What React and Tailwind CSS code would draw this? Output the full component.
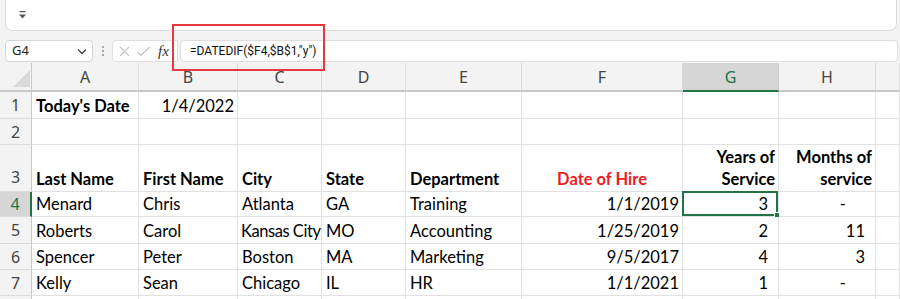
import React from "react";

const cols = ["A", "B", "C", "D", "E", "F", "G", "H", ""];
const colW = "grid-cols-[32px_107px_99px_84px_84px_116px_161px_96px_97px_1fr]";
const uiFont = { fontFamily: '"Noto Sans", "Open Sans", sans-serif' };
const cellFont = { fontFamily: 'Lato, "Liberation Sans", sans-serif' };

const rows = [
  { n: 1, h: "h-[27px]", cells: [
    { t: "Today's Date", b: true },
    { t: "1/4/2022", r: true },
    {}, {}, {}, {}, {}, {}, {},
  ] },
  { n: 2, h: "h-[26px]", cells: [{}, {}, {}, {}, {}, {}, {}, {}, {}] },
  { n: 3, h: "h-[47px]", cells: [
    { t: "Last Name", b: true },
    { t: "First Name", b: true },
    { t: "City", b: true },
    { t: "State", b: true },
    { t: "Department", b: true },
    { t: "Date of Hire", b: true, c: true, red: true },
    { t: ["Years of", "Service"], b: true, r: true },
    { t: ["Months of", "service"], b: true, r: true },
    {},
  ] },
  { n: 4, h: "h-[25px]", sel: true, cells: [
    { t: "Menard" }, { t: "Chris" }, { t: "Atlanta" }, { t: "GA" }, { t: "Training" },
    { t: "1/1/2019", r: true }, { t: "3", acc: true, active: true }, { t: "-", dash: true }, {},
  ] },
  { n: 5, h: "h-[27px]", cells: [
    { t: "Roberts" }, { t: "Carol" }, { t: "Kansas City", tight: true }, { t: "MO" }, { t: "Accounting" },
    { t: "1/25/2019", r: true }, { t: "2", acc: true }, { t: "11", acc: true }, {},
  ] },
  { n: 6, h: "h-[26px]", cells: [
    { t: "Spencer" }, { t: "Peter" }, { t: "Boston" }, { t: "MA" }, { t: "Marketing" },
    { t: "9/5/2017", r: true }, { t: "4", acc: true }, { t: "3", acc: true }, {},
  ] },
  { n: 7, h: "h-[26px]", cells: [
    { t: "Kelly" }, { t: "Sean" }, { t: "Chicago" }, { t: "IL" }, { t: "HR" },
    { t: "1/1/2021", r: true }, { t: "1", acc: true }, { t: "-", dash: true }, {},
  ] },
  { n: "", h: "h-[26px]", cells: [{}, {}, {}, {}, {}, {}, {}, {}, {}] },
];

function Cell({ c }) {
  let align = "justify-start pl-[4px]";
  if (c.r) align = "justify-end pr-[3px]";
  if (c.c) align = "justify-center";
  if (c.acc) align = "justify-end pr-[10px]";
  if (c.dash) align = "justify-end pr-[29px]";
  if (c.tight) align = "justify-start pl-[3px] tracking-[-0.45px]";
  const color = c.red ? "text-[#ee1c25]" : "text-black";
  return (
    <div
      className={`relative flex items-end ${align} border-r border-b border-[#e1e1e1] bg-white whitespace-nowrap text-[16.5px] leading-[22px] pb-[1px] ${c.b ? "font-bold" : ""} ${color}`}
      style={cellFont}
    >
      {Array.isArray(c.t) ? (
        <div className="flex flex-col items-end">
          {c.t.map((l) => (
            <span key={l}>{l}</span>
          ))}
        </div>
      ) : (
        <span>{c.t}</span>
      )}
      {c.active && (
        <div className="absolute -left-[1px] -top-[1px] right-0 bottom-0 border-2 border-[#217346]">
          <div className="absolute -right-[4px] -bottom-[4px] w-[6px] h-[6px] bg-[#217346] border border-white" />
        </div>
      )}
    </div>
  );
}

export default function App() {
  return (
    <div className="relative w-[900px] h-[299px] overflow-hidden bg-[#f3f3f3]" style={uiFont}>
      {/* quick access panel */}
      <div className="ml-[5px] mr-[3px] h-[31px] bg-white border border-t-0 border-[#dcdcdc] rounded-b-[7px] flex items-center pl-[12px]">
        <svg width="9" height="10" viewBox="0 0 9 10">
          <rect x="1.5" y="1" width="6" height="1.2" fill="#555" />
          <path d="M1 4.5 L8 4.5 L4.5 8.5 Z" fill="#555" />
        </svg>
      </div>

      {/* formula row */}
      <div className="mt-[9px] h-[22px] flex items-stretch pl-[5px] pr-[2px]">
        <div className="w-[88px] bg-white border border-[#d6d6d6] rounded-[4px] flex items-center justify-between pl-[6px] pr-[5px]">
          <span className="text-[13px] text-[#222]">G4</span>
          <svg width="10" height="7" viewBox="0 0 10 7">
            <path d="M1 1.5 L5 5.5 L9 1.5" stroke="#444" strokeWidth="1.3" fill="none" />
          </svg>
        </div>
        <div className="w-[19px] flex flex-col items-center justify-center gap-[2px]">
          <div className="w-[2px] h-[2px] bg-[#888] rounded-full" />
          <div className="w-[2px] h-[2px] bg-[#888] rounded-full" />
          <div className="w-[2px] h-[2px] bg-[#888] rounded-full" />
        </div>
        <div className="w-[66px] bg-white border border-[#dedede] rounded-l-[4px] flex items-center pl-[5px]">
          <svg width="13" height="13" viewBox="0 0 13 13">
            <path d="M2 2 L11 11 M11 2 L2 11" stroke="#c4c4c4" strokeWidth="1.2" />
          </svg>
          <svg width="15" height="13" viewBox="0 0 15 13" className="ml-[5px]">
            <path d="M1.5 7 L5 10.5 L13.5 2" stroke="#c4c4c4" strokeWidth="1.2" fill="none" />
          </svg>
          <span className="ml-[7px] text-[15px] italic text-[#333]" style={{ fontFamily: '"Liberation Serif", serif' }}>
            fx
          </span>
        </div>
        <div className="w-[2px]" />
        <div className="flex-1 bg-white border border-[#dedede] rounded-[4px] flex items-center pl-[9px]">
          <span className="text-[12px] text-[#111]" style={{ fontFamily: 'Roboto, "Noto Sans", sans-serif' }}>
            =DATEDIF($F4,$B$1,"y")
          </span>
        </div>
      </div>

      {/* grid */}
      <div className={`mt-[1px] grid ${colW}`}>
        {/* header row */}
        <div className="h-[29px] relative bg-[#f3f3f3] border-r border-b-2 border-[#c8c8c8]">
          <svg className="absolute left-[13px] top-[7px]" width="17" height="17" viewBox="0 0 17 17">
            <path d="M17 0 L17 17 L0 17 Z" fill="#d9d9d9" />
          </svg>
        </div>
        {cols.map((c, i) => (
          <div
            key={i}
            className={`h-[29px] flex items-center justify-center text-[16px] ${
              c === "G"
                ? "bg-[#d6d6d6] text-[#217346] border-b-2 border-[#217346] border-r border-r-[#c8c8c8]"
                : "bg-[#f3f3f3] text-[#444] border-b-2 border-b-[#c8c8c8] border-r border-r-[#dadada]"
            }`}
          >
            {c}
          </div>
        ))}

        {rows.map((row, ri) => (
          <React.Fragment key={ri}>
            <div
              className={`${row.h} flex items-center justify-center text-[16px] border-b border-b-[#dadada] ${
                row.sel
                  ? "bg-[#d6d6d6] text-[#217346] border-r-2 border-r-[#217346]"
                  : "bg-[#f3f3f3] text-[#444] border-r border-r-[#c8c8c8]"
              } ${row.n === 3 ? "items-end pb-[2px]" : ""}`}
            >
              {row.n}
            </div>
            {row.cells.map((c, i) => (
              <Cell key={i} c={c} />
            ))}
          </React.Fragment>
        ))}
      </div>

      {/* red annotation box */}
      <div className="absolute left-[172px] top-[24px] w-[153px] h-[47px] border-2 border-[#e5383f]" />
    </div>
  );
}
